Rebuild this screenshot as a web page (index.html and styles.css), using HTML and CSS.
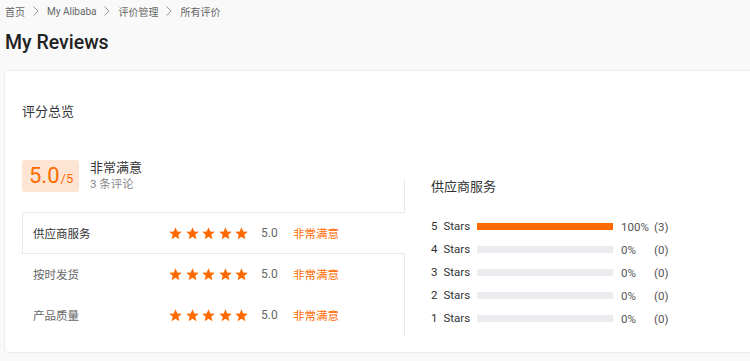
FILE: index.html
```html
<!DOCTYPE html>
<html>
<head>
<meta charset="utf-8">
<link rel="stylesheet" href="styles.css">
</head>
<body>
<nav class="crumbs">
  <span>首页</span>
  <svg class="chev" viewBox="0 0 6 10" width="6" height="10"><path d="M0.5 0.5 L5 5 L0.5 9.5" fill="none" stroke="#999" stroke-width="1"/></svg>
  <span>My Alibaba</span>
  <svg class="chev" viewBox="0 0 6 10" width="6" height="10"><path d="M0.5 0.5 L5 5 L0.5 9.5" fill="none" stroke="#999" stroke-width="1"/></svg>
  <span>评价管理</span>
  <svg class="chev" viewBox="0 0 6 10" width="6" height="10"><path d="M0.5 0.5 L5 5 L0.5 9.5" fill="none" stroke="#999" stroke-width="1"/></svg>
  <span>所有评价</span>
</nav>
<h1 class="title">My Reviews</h1>
<section class="card">
  <h2 class="section-title">评分总览</h2>
  <div class="summary">
    <div class="left">
      <div class="overall">
        <div class="score-box"><span class="score">5.0</span><span class="of">/5</span></div>
        <div class="overall-text">
          <div class="level">非常满意</div>
          <div class="count">3 条评论</div>
        </div>
      </div>
      <ul class="tabs">
        <li class="tab active">
          <span class="tab-label">供应商服务</span>
          <span class="stars">
            <svg viewBox="0 0 24 24"><path d="M12 17.27L18.18 21l-1.64-7.03L22 9.24l-7.19-.61L12 2 9.19 8.63 2 9.24l5.46 4.73L5.82 21z"/></svg>
            <svg viewBox="0 0 24 24"><path d="M12 17.27L18.18 21l-1.64-7.03L22 9.24l-7.19-.61L12 2 9.19 8.63 2 9.24l5.46 4.73L5.82 21z"/></svg>
            <svg viewBox="0 0 24 24"><path d="M12 17.27L18.18 21l-1.64-7.03L22 9.24l-7.19-.61L12 2 9.19 8.63 2 9.24l5.46 4.73L5.82 21z"/></svg>
            <svg viewBox="0 0 24 24"><path d="M12 17.27L18.18 21l-1.64-7.03L22 9.24l-7.19-.61L12 2 9.19 8.63 2 9.24l5.46 4.73L5.82 21z"/></svg>
            <svg viewBox="0 0 24 24"><path d="M12 17.27L18.18 21l-1.64-7.03L22 9.24l-7.19-.61L12 2 9.19 8.63 2 9.24l5.46 4.73L5.82 21z"/></svg>
          </span>
          <span class="tab-score">5.0</span>
          <span class="tab-level">非常满意</span>
        </li>
        <li class="tab">
          <span class="tab-label">按时发货</span>
          <span class="stars">
            <svg viewBox="0 0 24 24"><path d="M12 17.27L18.18 21l-1.64-7.03L22 9.24l-7.19-.61L12 2 9.19 8.63 2 9.24l5.46 4.73L5.82 21z"/></svg>
            <svg viewBox="0 0 24 24"><path d="M12 17.27L18.18 21l-1.64-7.03L22 9.24l-7.19-.61L12 2 9.19 8.63 2 9.24l5.46 4.73L5.82 21z"/></svg>
            <svg viewBox="0 0 24 24"><path d="M12 17.27L18.18 21l-1.64-7.03L22 9.24l-7.19-.61L12 2 9.19 8.63 2 9.24l5.46 4.73L5.82 21z"/></svg>
            <svg viewBox="0 0 24 24"><path d="M12 17.27L18.18 21l-1.64-7.03L22 9.24l-7.19-.61L12 2 9.19 8.63 2 9.24l5.46 4.73L5.82 21z"/></svg>
            <svg viewBox="0 0 24 24"><path d="M12 17.27L18.18 21l-1.64-7.03L22 9.24l-7.19-.61L12 2 9.19 8.63 2 9.24l5.46 4.73L5.82 21z"/></svg>
          </span>
          <span class="tab-score">5.0</span>
          <span class="tab-level">非常满意</span>
        </li>
        <li class="tab">
          <span class="tab-label">产品质量</span>
          <span class="stars">
            <svg viewBox="0 0 24 24"><path d="M12 17.27L18.18 21l-1.64-7.03L22 9.24l-7.19-.61L12 2 9.19 8.63 2 9.24l5.46 4.73L5.82 21z"/></svg>
            <svg viewBox="0 0 24 24"><path d="M12 17.27L18.18 21l-1.64-7.03L22 9.24l-7.19-.61L12 2 9.19 8.63 2 9.24l5.46 4.73L5.82 21z"/></svg>
            <svg viewBox="0 0 24 24"><path d="M12 17.27L18.18 21l-1.64-7.03L22 9.24l-7.19-.61L12 2 9.19 8.63 2 9.24l5.46 4.73L5.82 21z"/></svg>
            <svg viewBox="0 0 24 24"><path d="M12 17.27L18.18 21l-1.64-7.03L22 9.24l-7.19-.61L12 2 9.19 8.63 2 9.24l5.46 4.73L5.82 21z"/></svg>
            <svg viewBox="0 0 24 24"><path d="M12 17.27L18.18 21l-1.64-7.03L22 9.24l-7.19-.61L12 2 9.19 8.63 2 9.24l5.46 4.73L5.82 21z"/></svg>
          </span>
          <span class="tab-score">5.0</span>
          <span class="tab-level">非常满意</span>
        </li>
      </ul>
    </div>
    <div class="detail">
      <h3 class="detail-title">供应商服务</h3>
      <div class="dist">
        <div class="dist-row"><span class="dist-label"><span class="num">5</span>Stars</span><span class="bar"><span class="fill" style="width:100%"></span></span><span class="pct">100%</span><span class="cnt">(3)</span></div>
        <div class="dist-row"><span class="dist-label"><span class="num">4</span>Stars</span><span class="bar"><span class="fill" style="width:0%"></span></span><span class="pct">0%</span><span class="cnt">(0)</span></div>
        <div class="dist-row"><span class="dist-label"><span class="num">3</span>Stars</span><span class="bar"><span class="fill" style="width:0%"></span></span><span class="pct">0%</span><span class="cnt">(0)</span></div>
        <div class="dist-row"><span class="dist-label"><span class="num">2</span>Stars</span><span class="bar"><span class="fill" style="width:0%"></span></span><span class="pct">0%</span><span class="cnt">(0)</span></div>
        <div class="dist-row"><span class="dist-label"><span class="num">1</span>Stars</span><span class="bar"><span class="fill" style="width:0%"></span></span><span class="pct">0%</span><span class="cnt">(0)</span></div>
      </div>
    </div>
  </div>
</section>
</body>
</html>
```

FILE: styles.css
```css
* { box-sizing: border-box; }
html, body { margin: 0; padding: 0; }
body {
  background: #f9f9f9;
  font-family: Roboto, "Noto Sans CJK SC", sans-serif;
  color: #333;
  overflow: hidden;
  width: 750px;
  height: 361px;
}
.crumbs {
  display: flex;
  align-items: center;
  height: 22px;
  padding-left: 5px;
  font-size: 10px;
  color: #666;
}
.chev { margin: 0 8px 0 8px; display: block; }
.title {
  margin: 7px 0 13px;
  padding-left: 5px;
  font-size: 19.5px;
  line-height: 28px;
  font-weight: 500;
  color: #222;
}
.card {
  margin-left: 4px;
  width: 780px;
  background: #fff;
  border: 1px solid #ececec;
  border-radius: 4px;
  padding: 31px 0 16px 17px;
}
.section-title {
  margin: 0 0 38px;
  font-size: 13px;
  line-height: 20px;
  font-weight: 400;
  color: #333;
}
.summary { display: flex; }
.left { width: 383px; margin-right: -1px; position: relative; z-index: 1; }
.overall { display: flex; align-items: center; height: 32px; margin-bottom: 20px; }
.score-box {
  width: 57px; height: 32px;
  background: #fee4d2;
  border-radius: 3px;
  padding: 3px 0 0 7px;
  color: #ff6a00;
  line-height: 26px;
  white-space: nowrap;
}
.score { font-size: 22px; }
.of { font-size: 13px; margin-left: 1px; }
.overall-text { margin-left: 11px; }
.level { font-size: 13px; line-height: 16px; color: #333; }
.count { font-size: 11.5px; line-height: 16px; color: #888; }
.tabs { list-style: none; margin: 0; padding: 0; }
.tab {
  display: flex;
  align-items: center;
  height: 42px;
  padding-left: 10px;
  border: 1px solid transparent;
  border-right: none;
  margin-top: -1px;
  font-size: 11.5px;
  color: #666;
}
.tab:first-child { margin-top: 0; }
.tab.active { border-color: #e8e8e8; background: #fff; color: #333; }
.tab-label { width: 135px; }
.stars { display: flex; gap: 1.5px; width: 93px; }
.stars svg { width: 15px; height: 15px; fill: #ff6a00; display: block; }
.tab-score { width: 32px; color: #666; font-size: 12px; }
.tab-level { color: #ff6a00; }
.detail {
  flex: 1;
  margin-top: 19px;
  border-left: 1px solid #e8e8e8;
  padding-left: 26px;
}
.detail-title {
  margin: 0 0 20px;
  font-size: 13px;
  line-height: 16px;
  font-weight: 400;
  color: #333;
}
.dist-row { display: flex; align-items: center; height: 23px; font-size: 11.5px; }
.dist-label { width: 46px; color: #333; margin-top: -2px; }
.num { margin-right: 6px; }
.bar { width: 136px; height: 7px; background: #ebecf0; display: block; }
.fill { display: block; height: 100%; background: #ff6a00; }
.pct { width: 33px; margin-left: 8px; color: #555; margin-top: 1px; }
.cnt { color: #555; margin-top: 1px; }
```
